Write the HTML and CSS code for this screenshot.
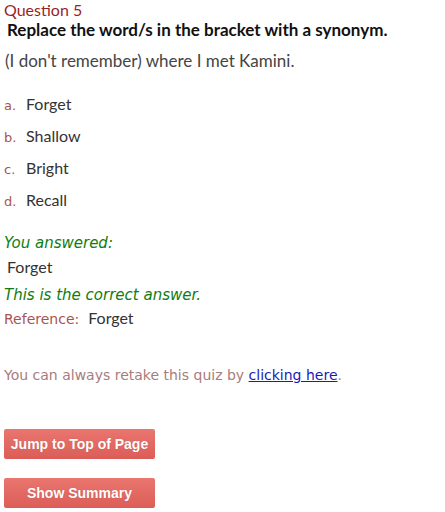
FILE: index.html
```html
<!DOCTYPE html>
<html lang="en">
<head>
  <meta charset="UTF-8">
  <title>Quiz result</title>
  <link rel="stylesheet" href="styles.css">
</head>
<body>
  <div class="quiz">
    <!-- Question -->
    <div class="q-head">
      <div class="q-num">Question 5</div>
      <div class="q-title">Replace the word/s in the bracket with a synonym.</div>
      <div class="q-text">(I don't remember) where I met Kamini.</div>
    </div>

    <!-- Choices -->
    <ul class="choices">
      <li><span class="letter">a.</span>Forget</li>
      <li><span class="letter">b.</span>Shallow</li>
      <li><span class="letter">c.</span>Bright</li>
      <li><span class="letter">d.</span>Recall</li>
    </ul>

    <!-- Feedback -->
    <div class="feedback">
      <div class="note">You answered:</div>
      <div class="answer">Forget</div>
      <div class="note">This is the correct answer.</div>
      <div class="ref"><span class="ref-label">Reference:</span>Forget</div>
    </div>

    <p class="retake">You can always retake this quiz by <a href="#">clicking here</a>.</p>

    <div class="actions">
      <button class="btn">Jump to Top of Page</button>
      <button class="btn">Show Summary</button>
    </div>
  </div>
</body>
</html>
```

FILE: styles.css
```css
/* General */
body {
  margin: 0;
  background: #ffffff;
  font-family: Lato, "Open Sans", sans-serif;
  color: #333;
}

.quiz {
  padding: 0 0 0 4px;
}

/* Question block */
.q-head {
  padding-bottom: 16px;
}

.q-num {
  color: #9b1f1f;
  font-size: 16px;
  line-height: 20px;
}

.q-title {
  font-weight: bold;
  font-size: 17px;
  line-height: 20px;
  color: #111;
  padding-left: 3px;
}

.q-text {
  font-size: 17px;
  color: #444;
  line-height: 20px;
  margin-top: 11px;
  padding-left: 1px;
}

/* Choices */
.choices {
  list-style: none;
  margin: 0;
  padding: 7px 0 0;
}

.choices li {
  display: flex;
  align-items: baseline;
  height: 32px;
  line-height: 20px;
  font-size: 16px;
  color: #333;
}

.letter {
  width: 22px;
  font-family: "DejaVu Sans", Verdana, sans-serif;
  font-size: 13px;
  color: #a8544e;
}

/* Feedback */
.feedback {
  margin-top: 9px;
}

.note {
  font-family: "DejaVu Sans", Verdana, sans-serif;
  font-style: italic;
  font-size: 15px;
  color: #0f7d0f;
  line-height: 24px;
}

.answer {
  font-size: 16px;
  line-height: 24px;
  margin-bottom: 4px;
  padding-left: 3px;
}

.ref {
  font-size: 16px;
  line-height: 22px;
}

.ref-label {
  font-family: "DejaVu Sans", Verdana, sans-serif;
  font-size: 14px;
  color: #a8544e;
  margin-right: 9px;
}

.retake {
  font-family: "DejaVu Sans", Verdana, sans-serif;
  font-size: 14px;
  color: #a87c7c;
  margin: 35px 0 0;
  line-height: 20px;
}

.retake a {
  color: #1a1ab8;
}

/* Buttons */
.actions {
  display: flex;
  flex-direction: column;
  gap: 19px;
  margin-top: 44px;
}

.btn {
  width: 151px;
  height: 30px;
  border: none;
  border-radius: 2px;
  background: linear-gradient(#e9766f, #dc5d57);
  color: #fff;
  font-family: "Liberation Sans", Arial, sans-serif;
  font-weight: bold;
  font-size: 14px;
  text-shadow: 0 0 1px rgba(0, 0, 0, 0.2);
  cursor: pointer;
}
```
